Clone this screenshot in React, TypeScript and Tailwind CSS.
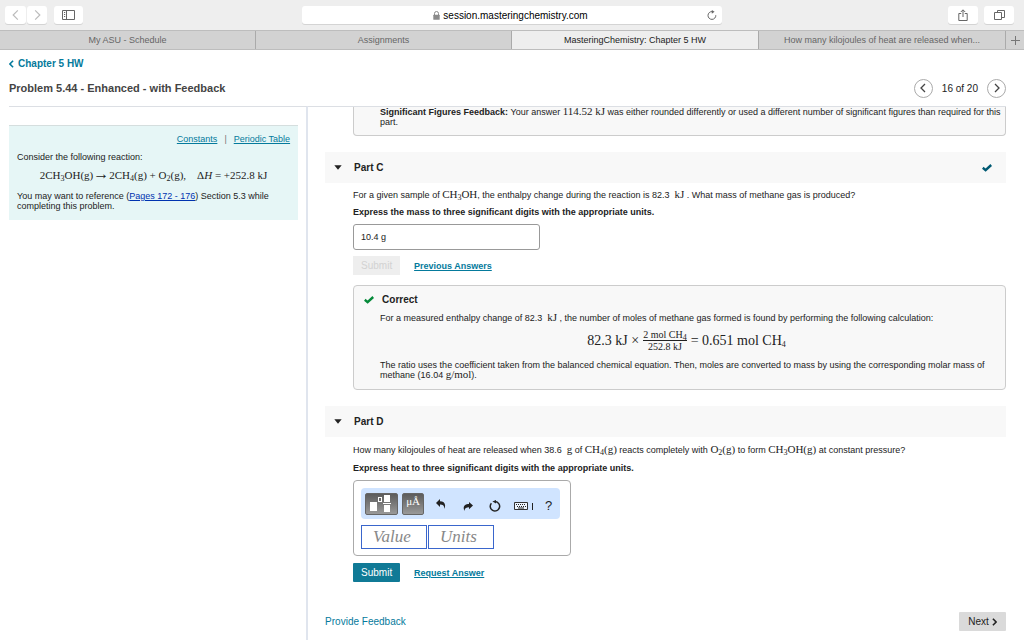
import React, { useState } from 'react';

const tabs = [
  { title: 'My ASU - Schedule', active: false },
  { title: 'Assignments', active: false },
  { title: 'MasteringChemistry: Chapter 5 HW', active: true },
  { title: 'How many kilojoules of heat are released when...', active: false },
];

const Sub: React.FC<{ children: React.ReactNode }> = ({ children }) => (
  <sub className="text-[8px] leading-[0]">{children}</sub>
);

// Inline chemistry / math, set in a serif face. Zero leading keeps it from stretching its line.
const M: React.FC<{ children: React.ReactNode; className?: string }> = ({ children, className = 'text-[11px]' }) => (
  <span className={`font-['Liberation_Serif',serif] leading-[0] whitespace-nowrap ${className}`}>{children}</span>
);

const Check: React.FC<{ className?: string }> = ({ className = '' }) => (
  <svg viewBox="0 0 10 8" className={`h-2 w-2.5 ${className}`} fill="none" stroke="currentColor" strokeWidth="2.4">
    <path d="M0.8 3.8 L3.6 6.1 L9.2 1" />
  </svg>
);

const Chevron: React.FC<{ dir: 'left' | 'right'; className?: string; weight?: number }> = ({ dir, className = '', weight = 1.3 }) => (
  <svg viewBox="0 0 6 10" className={className} fill="none" stroke="currentColor" strokeWidth={weight}>
    <path d={dir === 'left' ? 'M5 1 L1 5 L5 9' : 'M1 1 L5 5 L1 9'} />
  </svg>
);

const PartHeader: React.FC<{ title: string; done?: boolean }> = ({ title, done }) => (
  <div className="flex h-[31px] items-center bg-[#f8f8f8] pr-[14px] pl-[9px]">
    <button className="flex items-center gap-3 text-[10px] font-bold text-[#222]">
      <svg viewBox="0 0 8 5" className="h-[5px] w-2">
        <path d="M0.3 0.3 H7.7 L4 4.7 Z" fill="#222" />
      </svg>
      {title}
    </button>
    {done && <Check className="ml-auto text-[#005a73]" />}
  </div>
);

const BrowserBar: React.FC = () => (
  <div className="grid h-[30px] grid-cols-[1fr_41%_1fr] items-center bg-[#eeeeee]">
    <div className="flex items-center pl-[5px]">
      <button aria-label="Back" className="flex h-[18px] w-[21px] items-center justify-center rounded-[3px] bg-white text-[#bbb] shadow-[0_1px_0_#d4d4d4]">
        <Chevron dir="left" className="h-3 w-[7px]" weight={1} />
      </button>
      <button aria-label="Forward" className="ml-px flex h-[18px] w-5 items-center justify-center rounded-[3px] bg-white text-[#bbb] shadow-[0_1px_0_#d4d4d4]">
        <Chevron dir="right" className="h-3 w-[7px]" weight={1} />
      </button>
      <button aria-label="Sidebar" className="ml-[7px] flex h-[18px] w-[29px] items-center justify-center rounded-[3px] bg-white shadow-[0_1px_0_#d4d4d4]">
        <svg viewBox="0 0 13 10" className="h-[10px] w-[13px]" fill="none" stroke="#666">
          <path d="M0.5 0.5 H12.5 V9.5 H0.5 Z M4.5 0.5 V9.5" />
          <path d="M2 2.5 H3.2 M2 4.5 H3.2 M2 6.5 H3.2" />
        </svg>
      </button>
    </div>
    <div className="flex h-[18px] items-center rounded-[3px] bg-white pr-[5px] text-[10px] text-black shadow-[0_1px_0_#d4d4d4]">
      <div className="flex flex-1 items-center justify-center gap-[3px] pl-3">
        <svg viewBox="0 0 7 9" className="h-[9px] w-[7px]">
          <path d="M1.5 4 V2.5 A2 2 0 0 1 5.5 2.5 V4" fill="none" stroke="#8a8a8a" />
          <rect x="0.3" y="3.8" width="6.4" height="5" rx="0.5" fill="#8a8a8a" />
        </svg>
        <span>session.masteringchemistry.com</span>
      </div>
      <button aria-label="Reload">
        <svg viewBox="0 0 10 10" className="h-[10px] w-[10px]" fill="none" stroke="#666">
          <path d="M8.8 5.2 A3.9 3.9 0 1 1 5.2 1.6" />
          <path d="M4.8 0 L7.6 1.7 L4.8 3.8 Z" fill="#666" stroke="none" />
        </svg>
      </button>
    </div>
    <div className="flex justify-end gap-[6px] pr-[10px]">
      <button aria-label="Share" className="flex h-[18px] w-[30px] items-center justify-center rounded-[3px] bg-white shadow-[0_1px_0_#d4d4d4]">
        <svg viewBox="0 0 10 12" className="h-3 w-[10px]" fill="none" stroke="#666">
          <path d="M3.2 4.5 H0.8 V11.5 H9.2 V4.5 H6.8 M5 8 V1 M2.8 3 L5 0.8 L7.2 3" />
        </svg>
      </button>
      <button aria-label="Tabs" className="flex h-[18px] w-[30px] items-center justify-center rounded-[3px] bg-white shadow-[0_1px_0_#d4d4d4]">
        <svg viewBox="0 0 11 10" className="h-[10px] w-[11px]" fill="none" stroke="#666">
          <path d="M0.5 2.5 H7.5 V9.5 H0.5 Z M3.5 2.5 V0.5 H10.5 V7.5 H7.5" />
        </svg>
      </button>
    </div>
  </div>
);

const TabStrip: React.FC = () => (
  <nav className="grid h-5 grid-cols-[256fr_256fr_247fr_247fr_18px] border-y border-[#bdbdbd] bg-[#d2d2d2] text-[9px]">
    {tabs.map(tab => (
      <button
        key={tab.title}
        className={`truncate border-r border-[#aaa] pt-px ${tab.active ? 'bg-[#eeeeee] text-[#222]' : 'text-[#666]'}`}
      >
        {tab.title}
      </button>
    ))}
    <button aria-label="New tab" className="flex items-center justify-center">
      <svg viewBox="0 0 9 9" className="h-[9px] w-[9px]" stroke="#777">
        <path d="M4.5 0 V9 M0 4.5 H9" />
      </svg>
    </button>
  </nav>
);

const EquationToolbar: React.FC = () => (
  <div className="flex h-[31px] w-[199px] items-center rounded-[4px] bg-[#d0e4ff] pl-1 text-[#222]">
    <button aria-label="Templates" className="h-[22px] w-[33px] rounded-[2px] border border-[#666] bg-linear-to-b from-[#5c5c5c] to-[#999]">
      <svg viewBox="0 0 31 20" className="h-5 w-[31px]">
        <path d="M4 8 H11 V17 H4 Z M18 1 H24 V8 H18 Z M18 11 H24 V18 H18 Z M17 9 H25 V10 H17 Z" fill="#fff" />
        <rect x="12.5" y="3.5" width="3" height="4" fill="none" stroke="#fff" />
      </svg>
    </button>
    <button className="ml-1 h-[22px] w-[22px] rounded-[2px] border border-[#666] bg-linear-to-b from-[#5c5c5c] to-[#999] pb-1 font-['Liberation_Serif',serif] text-[11px] leading-none text-white">
      μÅ
    </button>
    <button aria-label="Undo" className="ml-3">
      <svg viewBox="0 0 10 10" className="h-[10px] w-[10px]">
        <path d="M4 0 V2.3 C8 2.3 10.6 5 8.2 10 C8.4 6.8 7 5.6 4 5.6 V8 L0 4 Z" fill="#222" />
      </svg>
    </button>
    <button aria-label="Redo" className="ml-[17px] pt-1">
      <svg viewBox="0 0 10 10" className="h-[10px] w-[10px]">
        <path d="M6 1 V3 C2 3 -0.8 5.5 1.6 10 C1.6 7.2 3 6.2 6 6.2 V8.3 L10 4.6 Z" fill="#222" />
      </svg>
    </button>
    <button aria-label="Reset" className="ml-4 pt-1">
      <svg viewBox="0 0 12 12" className="h-3 w-3">
        <path d="M2.4 3.2 A4.7 4.7 0 1 0 6.2 1.6" fill="none" stroke="#222" strokeWidth="1.5" />
        <path d="M3.4 1.6 L7 0 V3.4 Z" fill="#222" />
      </svg>
    </button>
    <button aria-label="Keyboard shortcuts" className="ml-[13px] pt-1">
      <svg viewBox="0 0 20 8" className="h-2 w-5">
        <path d="M0.5 0.5 H13.5 V7.5 H0.5 Z" fill="#eef5ff" stroke="#333" />
        <path d="M2 2.5 H12" stroke="#222" strokeDasharray="1 1" />
        <path d="M3 4.5 H12" stroke="#222" strokeDasharray="1 1" />
        <path d="M4 6 H10 M18.5 1 V8" stroke="#222" />
      </svg>
    </button>
    <button aria-label="Help" className="ml-[11px] pt-1 text-[13px] leading-none">?</button>
  </div>
);

const ProblemIntro: React.FC = () => (
  <div className="border-t border-[#d5dede] bg-[#e6f6f6] px-2 pt-2 pb-[9px] text-[9px] leading-[10px]">
    <div className="flex justify-end gap-[7px] text-[#047a9c]">
      <a href="#constants" className="underline">Constants</a>
      <span className="text-[#777]">|</span>
      <a href="#periodic-table" className="underline">Periodic Table</a>
    </div>
    <p className="mt-2">Consider the following reaction:</p>
    <p className="mt-[5px] flex h-4 items-center justify-center">
      <M>
        2CH<Sub>3</Sub>OH(g)<span className="text-[16px]">→</span>2CH<Sub>4</Sub>(g) + O<Sub>2</Sub>(g),&nbsp;&nbsp;&nbsp; Δ<i>H</i> = +252.8 kJ
      </M>
    </p>
    <p className="mt-2">
      You may want to reference (<a href="#pages" className="text-[#0033b0] underline">Pages 172 - 176</a>) Section 5.3 while completing this problem.
    </p>
  </div>
);

const PartC: React.FC = () => {
  const [answer, setAnswer] = useState('10.4 g');

  return (
    <section className="mt-4">
      <PartHeader title="Part C" done />
      <div className="pl-7">
        <p className="mt-[7px]">
          For a given sample of <M>CH<Sub>3</Sub>OH</M>, the enthalpy change during the reaction is 82.3&nbsp; <M>kJ</M> . What mass of methane gas is produced?
        </p>
        <label htmlFor="answer-c" className="mt-[7px] block font-bold">
          Express the mass to three significant digits with the appropriate units.
        </label>
        <input
          id="answer-c"
          value={answer}
          onChange={e => setAnswer(e.target.value)}
          className="mt-[7px] block h-[26px] w-[187px] rounded-[3px] border border-[#999] px-[7px] text-[9px]"
        />
        <div className="mt-[6px] flex items-center gap-[14px]">
          <button disabled className="h-[19px] w-[47px] bg-[#eeeeee] text-[10px] text-[#d2d2d2]">Submit</button>
          <a href="#previous" className="font-bold text-[#047a9c] underline">Previous Answers</a>
        </div>
        <div className="mt-[10px] rounded-[4px] border border-[#ccc] bg-[#f8f8f8] pt-2 pr-5 pb-[9px] pl-[26px]">
          <div className="-ml-4 flex items-center gap-2 text-[10px] leading-3 font-bold">
            <Check className="text-[#068a3a]" />
            Correct
          </div>
          <p className="mt-[7px]">
            For a measured enthalpy change of 82.3&nbsp; <M>kJ</M> , the number of moles of methane gas formed is found by performing the following calculation:
          </p>
          <div className="mt-[6px] flex h-[23px] items-center justify-center gap-1 pl-2 font-['Liberation_Serif',serif] text-[14px] leading-none">
            <span>82.3 kJ ×</span>
            <span className="flex flex-col items-center text-[10px]">
              <span className="border-b border-[#222] leading-[11px]">2 mol CH<Sub>4</Sub></span>
              <span className="leading-[11px]">252.8 kJ</span>
            </span>
            <span>= 0.651 mol CH<Sub>4</Sub></span>
          </div>
          <p className="mt-2">
            The ratio uses the coefficient taken from the balanced chemical equation. Then, moles are converted to mass by using the corresponding molar mass of methane (16.04 <M>g/mol</M>).
          </p>
        </div>
      </div>
    </section>
  );
};

const PartD: React.FC = () => (
  <section className="mt-4">
    <PartHeader title="Part D" />
    <div className="pl-7">
      <p className="mt-2">
        How many kilojoules of heat are released when 38.6&nbsp; <M>g</M> of <M>CH<Sub>4</Sub>(g)</M> reacts completely with <M>O<Sub>2</Sub>(g)</M> to form <M>CH<Sub>3</Sub>OH(g)</M> at constant pressure?
      </p>
      <p className="mt-2 font-bold">Express heat to three significant digits with the appropriate units.</p>
      <div className="mt-[7px] w-[218px] rounded-[4px] border border-[#aaa] px-[7px] pt-[7px] pb-[6px]">
        <EquationToolbar />
        <div className="mt-[6px] flex gap-px">
          <input
            aria-label="Value"
            placeholder="Value"
            className="h-6 w-[66px] border border-[#3a66cc] px-[11px] font-['Liberation_Serif',serif] text-[17px] italic placeholder:text-[#888]"
          />
          <input
            aria-label="Units"
            placeholder="Units"
            className="h-6 w-[66px] border border-[#3a66cc] px-[11px] font-['Liberation_Serif',serif] text-[17px] italic placeholder:text-[#888]"
          />
        </div>
      </div>
      <div className="mt-[7px] flex items-center gap-[14px]">
        <button className="h-[19px] w-[47px] rounded-[1px] bg-[#107a96] text-[10px] text-white">Submit</button>
        <a href="#request" className="font-bold text-[#047a9c] underline">Request Answer</a>
      </div>
    </div>
  </section>
);

const App: React.FC = () => {
  return (
    <div className="flex min-h-screen flex-col bg-white font-['Liberation_Sans',Arial,sans-serif] text-[#222]">
      <BrowserBar />
      <TabStrip />

      <header className="pt-2 pr-[18px] pl-[9px]">
        <a href="#chapter" className="flex items-center gap-1 text-[10px] leading-3 font-bold text-[#047a9c]">
          <Chevron dir="left" className="h-2 w-[5px]" weight={2} />
          Chapter 5 HW
        </a>
        <div className="flex h-9 items-center justify-between">
          <h1 className="text-[11px] font-bold text-[#444]">Problem 5.44 - Enhanced - with Feedback</h1>
          <div className="flex items-center gap-[9px] text-[10px]">
            <button aria-label="Previous problem" className="flex h-[19px] w-[19px] items-center justify-center rounded-full border border-[#aaa] text-[#444]">
              <Chevron dir="left" className="h-[10px] w-[6px]" />
            </button>
            16 of 20
            <button aria-label="Next problem" className="flex h-[19px] w-[19px] items-center justify-center rounded-full border border-[#aaa] text-[#444]">
              <Chevron dir="right" className="h-[10px] w-[6px]" />
            </button>
          </div>
        </div>
      </header>

      <main className="flex flex-1 pr-[18px] pl-[9px]">
        <aside className="w-[30%] shrink-0 border-t border-r-2 border-t-[#dcdfe4] border-r-[#e0e5ee] pt-[18px] pr-2">
          <ProblemIntro />
        </aside>

        <div className="flex-1 border-t border-[#dcdfe4] pl-[17px] text-[9px] leading-[10px]">
          <div className="ml-7 rounded-b-[4px] border-x border-b border-[#ccc] bg-[#f8f8f8] pb-2 pl-[26px]">
            <p>
              <b>Significant Figures Feedback:</b> Your answer <M>114.52 kJ</M> was either rounded differently or used a different number of significant figures than required for this part.
            </p>
          </div>
          <PartC />
          <PartD />
          <footer className="mt-[30px] mb-2 flex items-center justify-between text-[10px]">
            <a href="#feedback" className="text-[#047a9c]">Provide Feedback</a>
            <button className="flex h-[19px] w-[47px] items-center justify-center gap-[3px] rounded-[1px] bg-[#dadada]">
              Next
              <Chevron dir="right" className="h-2 w-[5px]" weight={2} />
            </button>
          </footer>
        </div>
      </main>
    </div>
  );
};

export default App;
